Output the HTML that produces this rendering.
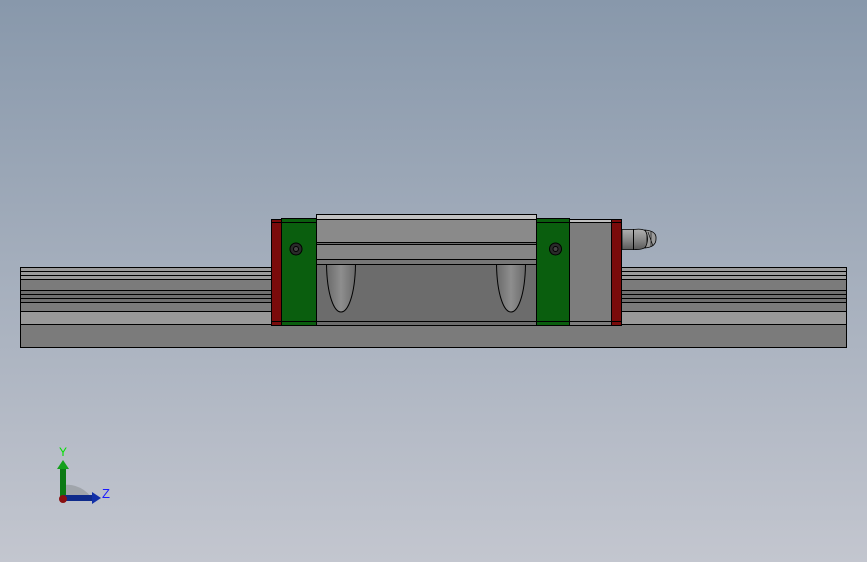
<!DOCTYPE html>
<html><head><style>
html,body{margin:0;padding:0;width:867px;height:562px;overflow:hidden;background:linear-gradient(#8898ab,#c3c6cf);}
svg{display:block}
</style></head><body>
<svg width="867" height="562" viewBox="0 0 867 562" xmlns="http://www.w3.org/2000/svg">
<defs>
<linearGradient id="el" x1="0" x2="1"><stop offset="0" stop-color="#6a6a6a"/><stop offset="0.5" stop-color="#8e8e8e"/><stop offset="1" stop-color="#6a6a6a"/></linearGradient>
<linearGradient id="nip" x1="0" y1="0" x2="0" y2="1"><stop offset="0" stop-color="#b0b0b0"/><stop offset="0.5" stop-color="#8a8a8a"/><stop offset="1" stop-color="#5a5a5a"/></linearGradient>
</defs>
<g stroke="#000" stroke-width="1">
<!-- rail -->
<rect x="20.5" y="267.5" width="826" height="12" fill="#9a9a9a"/>
<rect x="20.5" y="279.5" width="826" height="32" fill="#7b7b7b"/>
<rect x="20.5" y="290.5" width="826" height="12" fill="#6f6f6f"/>
<rect x="20.5" y="311.5" width="826" height="13" fill="#999"/>
<rect x="20.5" y="324.5" width="826" height="23" fill="#7b7b7b"/>
<line x1="20" y1="271.5" x2="846" y2="271.5"/>
<line x1="20" y1="275.5" x2="846" y2="275.5"/>
<line x1="20" y1="294.5" x2="846" y2="294.5"/>
<line x1="20" y1="298.5" x2="846" y2="298.5"/>
<!-- red end plates -->
<rect x="271.5" y="219.5" width="10" height="106" fill="#7a0b0b"/>
<rect x="611.5" y="219.5" width="10" height="106" fill="#7a0b0b"/>
<!-- green -->
<rect x="281.5" y="218.5" width="35" height="107" fill="#0a5e0e"/>
<rect x="536.5" y="218.5" width="33" height="107" fill="#0a5e0e"/>
<!-- right gray -->
<rect x="569.5" y="219.5" width="42" height="106" fill="#7d7d7d"/>
<rect x="569.5" y="219.5" width="42" height="3" fill="#c0c0c0"/>
<!-- center -->
<rect x="316.5" y="214.5" width="220" height="111" fill="#6c6c6c"/>
<rect x="316.5" y="214.5" width="220" height="5" fill="#c2c2c2"/>
<rect x="316.5" y="219.5" width="220" height="23" fill="#8a8a8a"/>
<rect x="316.5" y="244.5" width="220" height="15" fill="#858585"/>
<rect x="316.5" y="259.5" width="220" height="5" fill="#777"/>
<line x1="316" y1="321.5" x2="537" y2="321.5"/>
<path d="M326.5 264.5 C327 295 334 312 341 312 C348 312 355 295 355.5 264.5 Z" fill="url(#el)"/>
<path d="M496.5 264.5 C497 295 504 312 511 312 C518 312 525 295 525.5 264.5 Z" fill="url(#el)"/>
<line x1="282" y1="222.5" x2="316" y2="222.5"/>
<line x1="537" y1="222.5" x2="569" y2="222.5"/>
<line x1="272" y1="222.5" x2="281" y2="222.5"/>
<line x1="612" y1="222.5" x2="621" y2="222.5"/>
<line x1="272" y1="321.5" x2="621" y2="321.5"/>
<!-- bolts -->
<circle cx="296" cy="249" r="6" fill="#2a2a2a"/>
<circle cx="296" cy="249" r="2.5" fill="#444"/>
<circle cx="555.5" cy="249" r="6" fill="#2a2a2a"/>
<circle cx="555.5" cy="249" r="2.5" fill="#444"/>
<!-- nipple -->
<path d="M622 229.5 H634 Q645 228 647 233 V245 Q645 250 634 249.5 H622 Z" fill="url(#nip)" stroke-width="0.8"/>
<line x1="633.5" y1="229" x2="633.5" y2="250"/>
<path d="M645 230 Q657 231 656 239 Q656 247 645 248 Q650 239 645 230 Z" fill="#9a9a9a" stroke-width="0.8"/>
<path d="M648 232 L653 246 M651 231 L651 247" stroke-width="0.6"/>
</g>
<!-- triad -->
<path d="M63 500 V485 A30 30 0 0 1 93 500 Z" fill="#9a9da3" opacity="0.8"/>
<rect x="60" y="467" width="6" height="33" fill="#0c7a14"/>
<polygon points="57,469 63,460 69,469" fill="#14a01c"/>
<rect x="63" y="495" width="30" height="6" fill="#0e2a8a"/>
<polygon points="92,492 101,498 92,504" fill="#1230a8"/>
<circle cx="63" cy="499" r="4" fill="#8a1010"/>
<text x="59" y="456" font-family="Liberation Sans, sans-serif" font-size="12" fill="#00e000">Y</text>
<text x="102" y="498" font-family="Liberation Sans, sans-serif" font-size="13" fill="#1a1aff">Z</text>
</svg>
</body></html>
